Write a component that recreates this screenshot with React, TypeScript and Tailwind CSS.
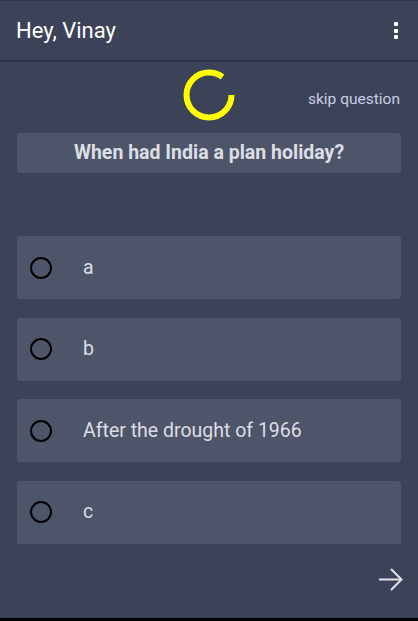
import React from "react";

const options = ["a", "b", "After the drought of 1966", "c"];

function Spinner() {
  const r = 22.5;
  const c = 2 * Math.PI * r;
  const arc = (305 / 360) * c;
  return (
    <svg width="52" height="52" viewBox="0 0 52 52">
      <circle
        cx="26"
        cy="26"
        r={r}
        fill="none"
        stroke="#ffff00"
        strokeWidth="6"
        strokeDasharray={`${arc} ${c - arc}`}
      />
    </svg>
  );
}

export default function App() {
  return (
    <div
      className="w-[418px] h-[621px] flex flex-col bg-[#3c4359] border-b-[3px] border-black overflow-hidden"
      style={{ fontFamily: "Roboto, 'Liberation Sans', sans-serif" }}
    >
      <header className="h-[62px] shrink-0 flex items-center justify-between pl-[16px] pr-[20px] bg-[#3c4359] border-t border-[#30364a] border-b-2 border-b-[#30364a]">
        <span className="text-[22px] text-white leading-none">Hey, Vinay</span>
        <div className="flex flex-col items-center gap-[2.5px]">
          <span className="w-[4px] h-[4px] bg-white rounded-[1px]" />
          <span className="w-[4px] h-[4px] bg-white rounded-[1px]" />
          <span className="w-[4px] h-[4px] bg-white rounded-[1px]" />
        </div>
      </header>

      <div className="grid grid-cols-[1fr_auto_1fr] items-center pt-[7px] pr-[18px]">
        <div />
        <div className="pl-[18px]">
          <Spinner />
        </div>
        <div className="flex justify-end pt-[10px]">
          <span className="text-[15.5px] text-[#c9cde2]">skip question</span>
        </div>
      </div>

      <div className="mx-[17px] mt-[12px] h-[40px] rounded-[3px] bg-[#4f5568] flex items-center justify-center">
        <span className="text-[19.5px] font-bold text-[#dcdee6]">When had India a plan holiday?</span>
      </div>

      <div className="mx-[17px] mt-[63px] flex flex-col gap-[18.5px]">
        {options.map((o) => (
          <div key={o} className="h-[63px] rounded-[3px] bg-[#4f5568] flex items-center pl-[13px]">
            <span className="w-[22px] h-[22px] rounded-full border-2 border-black shrink-0" />
            <span className="ml-[31px] text-[19.5px] text-[#dcdde4]">{o}</span>
          </div>
        ))}
      </div>

      <div className="flex justify-end pr-[15px] mt-[24px]">
        <svg width="24" height="23" viewBox="0 0 24 23" fill="none" stroke="#e2e2e6" strokeWidth="2">
          <path d="M0 11.5h22" />
          <path d="M12 1l10.5 10.5L12 22" />
        </svg>
      </div>
    </div>
  );
}
